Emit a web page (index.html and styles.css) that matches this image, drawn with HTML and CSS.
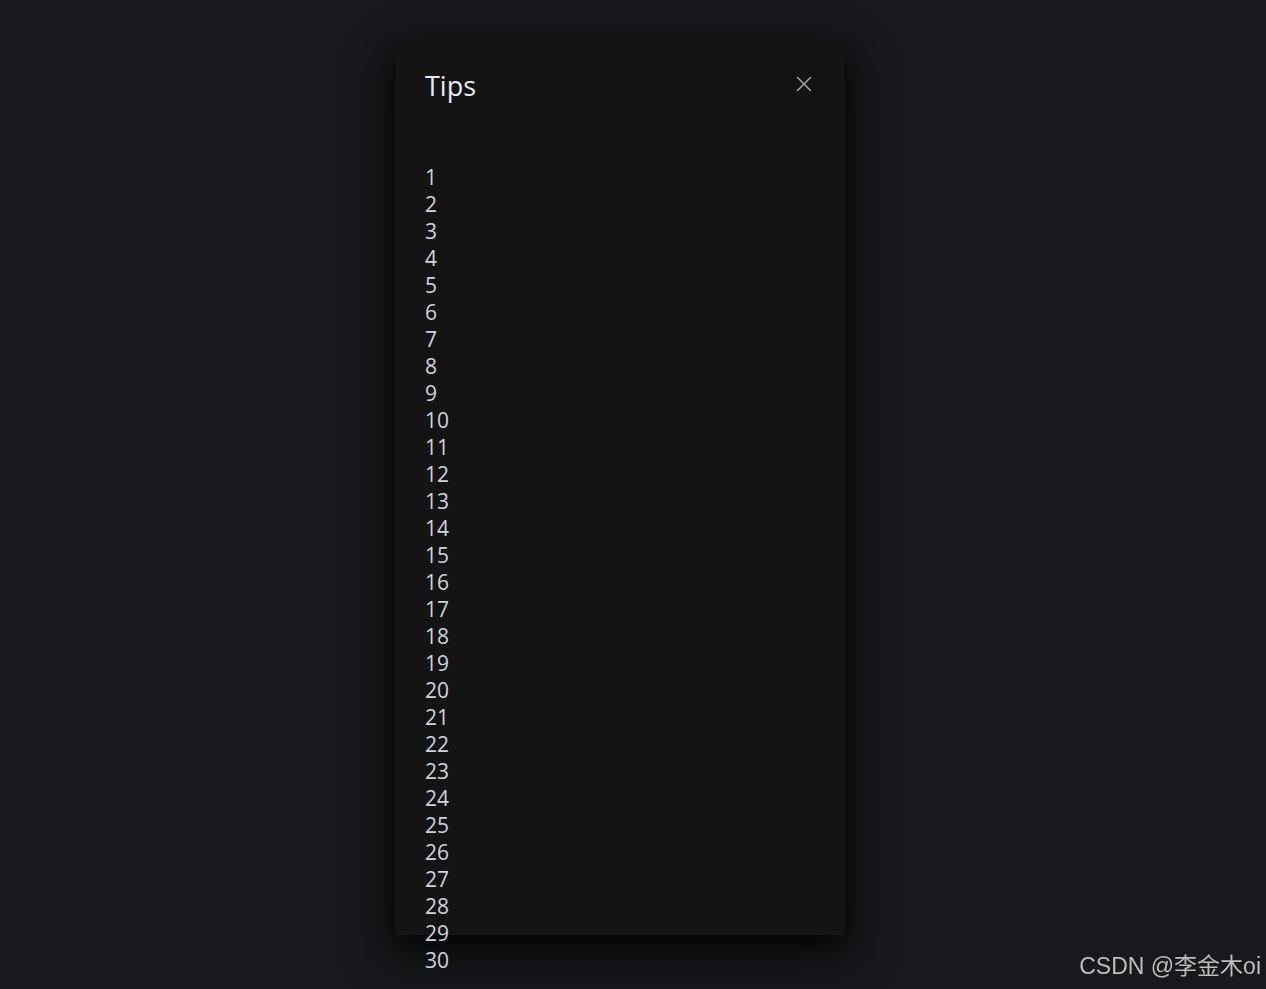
FILE: index.html
```html
<!DOCTYPE html>
<html lang="en">
<head>
<meta charset="utf-8">
<title>Tips</title>
<link rel="stylesheet" href="styles.css">
</head>
<body>
<div class="page">
  <div class="dialog" role="dialog">
    <header class="dialog-header">
      <span class="dialog-title">Tips</span>
      <button class="dialog-close" aria-label="Close">
        <svg viewBox="0 0 1024 1024" width="24" height="24"><path fill="currentColor" d="M764.288 214.592 512 466.88 259.712 214.592a31.936 31.936 0 0 0-45.12 45.12L466.752 512 214.528 764.224a31.936 31.936 0 1 0 45.12 45.184L512 557.184l252.288 252.288a31.936 31.936 0 0 0 45.12-45.12L557.12 512.064l252.288-252.352a31.936 31.936 0 1 0-45.12-45.184z"/></svg>
      </button>
    </header>
    <div class="dialog-body">
      <div>1</div><div>2</div><div>3</div><div>4</div><div>5</div>
      <div>6</div><div>7</div><div>8</div><div>9</div><div>10</div>
      <div>11</div><div>12</div><div>13</div><div>14</div><div>15</div>
      <div>16</div><div>17</div><div>18</div><div>19</div><div>20</div>
      <div>21</div><div>22</div><div>23</div><div>24</div><div>25</div>
      <div>26</div><div>27</div><div>28</div><div>29</div><div>30</div>
    </div>
  </div>
</div>
<div class="watermark">CSDN @李金木oi</div>
</body>
</html>
```

FILE: styles.css
```css
html, body {
  margin: 0;
  padding: 0;
  height: 100%;
  overflow: hidden;
  background: #18191c;
}

body {
  font-family: "Open Sans", "Noto Sans", "Noto Sans CJK SC", sans-serif;
}

.page {
  padding: 40px 0 0 395px;
}

.dialog {
  width: 450px;
  height: 895px;
  box-sizing: border-box;
  background: #141414;
  border-radius: 4px;
  box-shadow: 0 18px 48px 6px rgba(0, 0, 0, 0.36), 0 12px 30px rgba(0, 0, 0, 0.72);
}

.dialog-header {
  display: flex;
  justify-content: space-between;
  align-items: flex-start;
  padding: 28px 29px 15px 30px;
}

.dialog-title {
  font-size: 27px;
  line-height: 36px;
  color: #e5eaf3;
}

.dialog-close {
  margin-top: 4px;
  padding: 0;
  border: 0;
  background: transparent;
  width: 24px;
  height: 24px;
  color: #a3a6ad;
  display: flex;
  cursor: pointer;
}

.dialog-close svg {
  display: block;
}

.dialog-body {
  padding: 45px 30px 0 30px;
  font-size: 21px;
  line-height: 27px;
  color: #cfd3dc;
}

.watermark {
  position: fixed;
  right: 5px;
  bottom: 10px;
  font-family: "Liberation Sans", "Noto Sans CJK SC", sans-serif;
  font-size: 23px;
  line-height: 26px;
  color: #bdbdbd;
}
```
